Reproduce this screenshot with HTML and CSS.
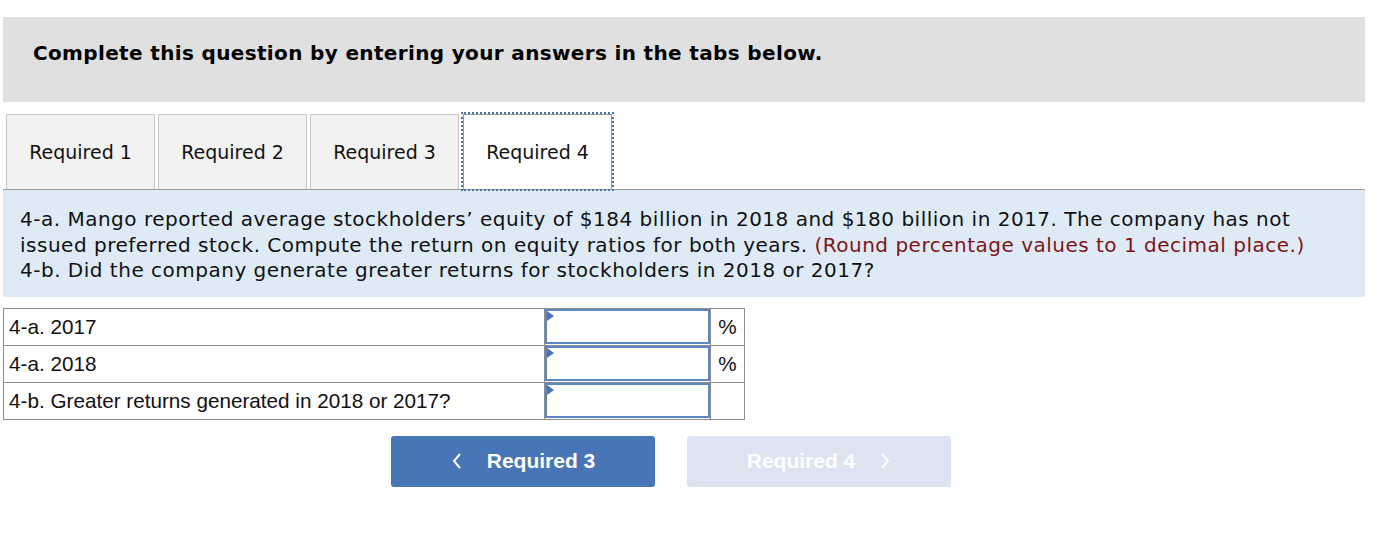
FILE: index.html
```html
<!DOCTYPE html>
<html lang="en">
<head>
    <meta charset="UTF-8">
    <title>Required 4</title>
    <link rel="stylesheet" href="styles.css">
</head>
<body>

<div class="page">
    <div class="banner">
        <h2 class="banner-title">Complete this question by entering your answers in the tabs below.</h2>
    </div>

    <div class="tabs">
        <button class="tab">Required 1</button>
        <button class="tab">Required 2</button>
        <button class="tab">Required 3</button>
        <button class="tab tab-active">Required 4</button>
    </div>

    <div class="prompt">
        <span>4-a. Mango reported average stockholders’ equity of $184 billion in 2018 and $180 billion in 2017. The company has not</span><br>
        <span>issued preferred stock. Compute the return on equity ratios for both years.</span> <span class="hint">(Round percentage values to 1 decimal place.)</span><br>
        <span>4-b. Did the company generate greater returns for stockholders in 2018 or 2017?</span>
    </div>

    <table class="answers">
        <tr>
            <td class="label">4-a. 2017</td>
            <td class="entry"><span class="field"><input type="text"></span></td>
            <td class="unit">%</td>
        </tr>
        <tr>
            <td class="label">4-a. 2018</td>
            <td class="entry"><span class="field"><input type="text"></span></td>
            <td class="unit">%</td>
        </tr>
        <tr>
            <td class="label">4-b. Greater returns generated in 2018 or 2017?</td>
            <td class="entry"><span class="field"><input type="text"></span></td>
            <td class="unit"></td>
        </tr>
    </table>

    <div class="nav">
        <button class="nav-btn nav-prev">
            <svg width="12" height="18" viewBox="0 0 12 18"><polyline points="9,2 3,9 9,16" fill="none" stroke="#fff" stroke-width="2"/></svg>
            <span>Required 3</span>
        </button>
        <button class="nav-btn nav-next" disabled>
            <span>Required 4</span>
            <svg width="12" height="18" viewBox="0 0 12 18"><polyline points="3,2 9,9 3,16" fill="none" stroke="#fff" stroke-width="2"/></svg>
        </button>
    </div>
</div>

</body>
</html>
```

FILE: styles.css
```css
body {
    margin: 0;
    background-color: #fff;
    font-family: "DejaVu Sans", Verdana, sans-serif;
    color: #111;
}

.page {
    width: 1362px;
    padding: 17px 0 0 3px;
}

.banner {
    height: 85px;
    box-sizing: border-box;
    padding: 25px 0 0 30px;
    background-color: #e0e0e0;
}

.banner-title {
    margin: 0;
    font-size: 20px;
    line-height: 23px;
    letter-spacing: 0.35px;
    font-weight: bold;
    color: #000;
}

.tabs {
    display: flex;
    margin-top: 12px;
    border-bottom: 1px solid #999;
}

.tab {
    width: 149px;
    height: 75px;
    margin-left: 3px;
    border: 1px solid #c8c8c8;
    border-bottom: none;
    background-color: #f2f2f2;
    font-family: "DejaVu Sans", Verdana, sans-serif;
    font-size: 19px;
    color: #111;
    padding: 0;
}

.tab-active {
    margin-left: 4px;
    background-color: #fff;
    border-color: #999;
    outline: 2px dotted #4a72b8;
    outline-offset: 0;
}

.prompt {
    padding: 17px 17px 13px 17px;
    background-color: #deebf7;
    font-size: 20px;
    line-height: 25.5px;
    letter-spacing: 0.5px;
    white-space: nowrap;
    color: #111;
}

.hint {
    color: #7f1416;
}

.answers {
    margin-top: 11px;
    width: 742px;
    border-collapse: collapse;
    font-family: "Liberation Sans", Arial, sans-serif;
    font-size: 20.7px;
    color: #111;
}

.answers td {
    height: 36px;
    border: 1px solid #8c8c8c;
    padding: 0;
}

.answers .label {
    width: 535px;
    padding-left: 5px;
}

.answers .entry {
    width: 165px;
}

.answers .unit {
    text-align: center;
}

.field {
    position: relative;
    display: block;
}

.field input {
    display: block;
    width: 100%;
    height: 35px;
    box-sizing: border-box;
    margin: 0;
    border: 2px solid #5d86c5;
    background-color: #fff;
}

.field::before {
    content: "";
    position: absolute;
    left: 2px;
    top: 2px;
    border-top: 5px solid transparent;
    border-bottom: 5px solid transparent;
    border-left: 7px solid #4a72b8;
}

.nav {
    display: flex;
    justify-content: center;
    gap: 32px;
    width: 1336px;
    margin-top: 16px;
}

.nav-btn {
    display: flex;
    align-items: center;
    justify-content: center;
    gap: 24px;
    width: 264px;
    height: 51px;
    border: none;
    border-radius: 3px;
    font-family: "Liberation Sans", Arial, sans-serif;
    font-size: 21px;
    font-weight: bold;
    color: #fff;
}

.nav-prev {
    background-color: #4775b5;
}

.nav-next {
    background-color: #dbe4f0;
}
```
